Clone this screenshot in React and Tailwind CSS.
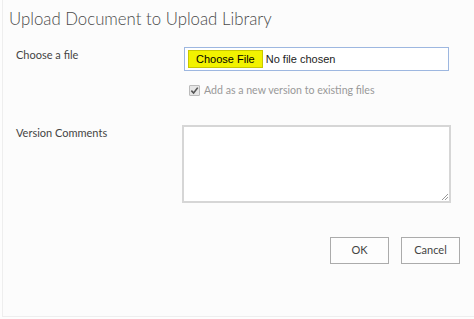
export default function App() {
  return (
    <div
      className="w-[474px] h-[319px] bg-[#fdfdfd] text-[#444] overflow-hidden"
      style={{ fontFamily: 'Lato, "Open Sans", "Liberation Sans", sans-serif' }}
    >
      <div className="w-[472px] h-[317px] ml-[2px] border-l border-b border-[#eeeeee] bg-[#fcfcfc]">
        <h1 className="pl-[6px] pt-[7px] text-[16.8px] font-light leading-[23px] text-[#4a4a4a]">
          Upload Document to Upload Library
        </h1>

        {/* Choose a file */}
        <div className="flex mt-[17px]">
          <div className="w-[181px] pl-[13px] text-[11px] text-[#444]">Choose a file</div>
          <div>
            <div className="flex items-center w-[265px] h-[24px] border border-[#9db7e0] bg-white pl-[3px]">
              <span
                className="h-[18px] px-[7px] flex items-center bg-[#f2f200] border border-[#c8c800] text-[11px] text-black"
                style={{ fontFamily: '"Liberation Sans", Arial, sans-serif' }}
              >
                Choose File
              </span>
              <span
                className="ml-[3px] text-[11px] text-[#222]"
                style={{ fontFamily: '"Liberation Sans", Arial, sans-serif' }}
              >
                No file chosen
              </span>
            </div>
            <label className="flex items-center mt-[12px] ml-[5px] gap-[4px] text-[10.6px] text-[#999]">
              <span className="w-[11px] h-[11px] border border-[#bbb] bg-[#e6e6e6] flex items-center justify-center rounded-[1px]">
                <svg width="9" height="9" viewBox="0 0 10 10">
                  <path d="M1.5 5.2 L4 7.8 L8.6 1.8" stroke="#555" strokeWidth="1.8" fill="none" />
                </svg>
              </span>
              Add as a new version to existing files
            </label>
          </div>
        </div>

        {/* Version comments */}
        <div className="flex mt-[26px]">
          <div className="w-[179px] pl-[13px] text-[11px] text-[#444]">Version Comments</div>
          <div className="relative w-[269px] h-[78px] border-2 border-[#d6d6d6] bg-white">
            <svg className="absolute right-[1px] bottom-[1px]" width="7" height="7" viewBox="0 0 7 7">
              <path d="M1 7 L7 1 M4 7 L7 4" stroke="#999" strokeWidth="1" />
            </svg>
          </div>
        </div>

        {/* Buttons */}
        <div className="flex justify-end gap-[12px] mt-[34px] pr-[14px]">
          <button className="w-[59px] h-[27px] border border-[#ababab] bg-[#fdfdfd] text-[11px] text-[#444]">
            OK
          </button>
          <button className="w-[59px] h-[27px] border border-[#ababab] bg-[#fdfdfd] text-[11px] text-[#444]">
            Cancel
          </button>
        </div>
      </div>
    </div>
  );
}
